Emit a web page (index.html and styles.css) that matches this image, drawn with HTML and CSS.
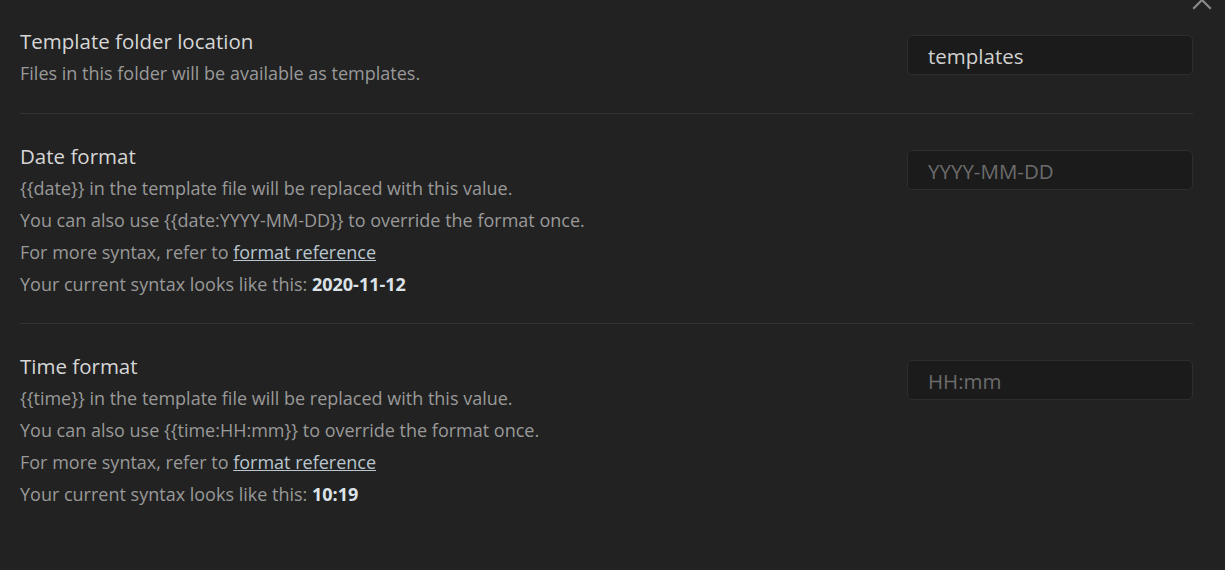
FILE: index.html
```html
<!DOCTYPE html>
<html lang="en">
<head>
<meta charset="utf-8">
<title>Templates settings</title>
<link rel="stylesheet" href="styles.css">
</head>
<body>
<div class="settings">
  <button class="close" aria-label="Close">
    <svg viewBox="0 0 20 20" width="20" height="20"><path d="M2 2 L18 18 M18 2 L2 18" stroke="currentColor" stroke-width="2.2" fill="none" stroke-linecap="square"/></svg>
  </button>
  <div class="setting-item">
    <div class="info">
      <div class="name">Template folder location</div>
      <div class="desc">Files in this folder will be available as templates.</div>
    </div>
    <input class="text-input value" type="text" value="templates">
  </div>
  <div class="setting-item">
    <div class="info">
      <div class="name">Date format</div>
      <div class="desc">
        <div>{{date}} in the template file will be replaced with this value.</div>
        <div>You can also use {{date:YYYY-MM-DD}} to override the format once.</div>
        <div>For more syntax, refer to <a href="#">format reference</a></div>
        <div>Your current syntax looks like this: <b>2020-11-12</b></div>
      </div>
    </div>
    <input class="text-input" type="text" placeholder="YYYY-MM-DD">
  </div>
  <div class="setting-item">
    <div class="info">
      <div class="name">Time format</div>
      <div class="desc">
        <div>{{time}} in the template file will be replaced with this value.</div>
        <div>You can also use {{time:HH:mm}} to override the format once.</div>
        <div>For more syntax, refer to <a href="#">format reference</a></div>
        <div>Your current syntax looks like this: <b>10:19</b></div>
      </div>
    </div>
    <input class="text-input" type="text" placeholder="HH:mm">
  </div>
</div>
</body>
</html>
```
FILE: styles.css
```css
html, body {
  margin: 0;
  padding: 0;
  background: #222222;
  height: 100%;
  overflow: hidden;
}
body {
  font-family: "Open Sans", "Noto Sans", sans-serif;
  color: #dadada;
}
.settings {
  position: relative;
  padding: 0 32px 0 20px;
}
.close {
  position: absolute;
  top: -10px;
  right: 13px;
  width: 20px;
  height: 20px;
  padding: 0;
  border: 0;
  background: transparent;
  color: #8a8a8a;
}
.close svg { display: block; }
.setting-item {
  display: flex;
  justify-content: space-between;
  align-items: flex-start;
  padding: 28px 0 23px;
  border-top: 1px solid #333333;
}
.close + .setting-item {
  border-top: 0;
  padding-top: 27px;
  padding-bottom: 24px;
}
.name {
  font-size: 20.5px;
  line-height: 28px;
  color: #d6d6d6;
}
.desc {
  margin-top: 2px;
  font-size: 18px;
  line-height: 32px;
  color: #999999;
}
.desc a {
  color: #b9c6cf;
  text-decoration: underline;
}
.desc b {
  color: #dce3e8;
  font-weight: 700;
}
.text-input {
  box-sizing: border-box;
  margin-top: 8px;
  width: 286px;
  height: 40px;
  padding: 2px 20px 0;
  background: #1b1b1b;
  border: 1px solid #2e2e2e;
  border-radius: 5px;
  font-family: "Open Sans", "Noto Sans", sans-serif;
  font-size: 20.5px;
  color: #d0d0d0;
  outline: none;
}
.text-input::placeholder {
  color: #6c6c6c;
}
```
